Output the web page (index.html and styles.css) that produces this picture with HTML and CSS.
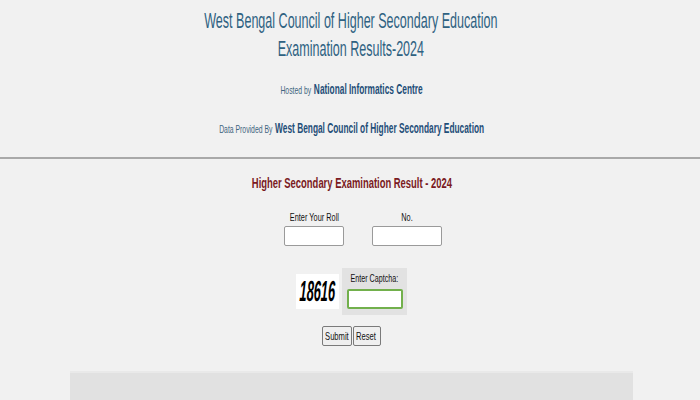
FILE: index.html
```html
<!DOCTYPE html>
<html>
<head>
<meta charset="utf-8">
<link rel="stylesheet" href="styles.css">
</head>
<body>
<header class="head">
  <h1 class="title"><span class="line">West Bengal Council of Higher Secondary Education</span><span class="line">Examination Results-2024</span></h1>
  <p class="credit host"><span class="nar sc-credit"><span class="small">Hosted by</span> <b>National Informatics Centre</b></span></p>
  <p class="credit data"><span class="nar sc-credit"><span class="small">Data Provided By</span> <b>West Bengal Council of Higher Secondary Education</b></span></p>
</header>
<main class="main">
  <h2 class="subtitle"><span class="nar sc-sub">Higher Secondary Examination Result - 2024</span></h2>
  <div class="roll">
    <div class="field f1">
      <label class="lbl"><span class="nar sc-lbl">Enter Your Roll</span></label>
      <input class="inp w1" type="text">
    </div>
    <div class="field f2">
      <label class="lbl"><span class="nar sc-lbl">No.</span></label>
      <input class="inp w2" type="text">
    </div>
  </div>
  <div class="captcha-row">
    <div class="captcha-img"><span class="nar sc-cap">18616</span></div>
    <div class="captcha-box">
      <label class="lbl"><span class="nar sc-lbl2">Enter Captcha:</span></label>
      <input class="inp cap" type="text">
    </div>
  </div>
  <div class="buttons">
    <button class="btn b-submit"><span class="nar sc-btn">Submit</span></button><button class="btn b-reset"><span class="nar sc-btn">Reset</span></button>
  </div>
  <div class="footer-box"></div>
</main>
</body>
</html>
```
FILE: styles.css
```css
html, body {
  margin: 0;
  padding: 0;
  background: #f1f1f1;
}
body {
  font-family: "Liberation Sans", Arial, sans-serif;
  width: 700px;
  height: 400px;
  overflow: hidden;
}
.nar {
  display: inline-block;
  white-space: nowrap;
  transform-origin: 50% 50%;
}
.sc-credit { transform: scaleX(0.595); }
.sc-sub { transform: scaleX(0.65); }
.sc-lbl { transform: scaleX(0.64); }
.sc-lbl2 { transform: scaleX(0.62); }
.sc-btn { transform: scaleX(0.66); }
.sc-cap { transform: scaleX(0.44) skewX(-4deg); }

.head {
  text-align: center;
  padding-top: 7px;
  height: 150px;
  border-bottom: 2px solid #a9a9a9;
}
.title {
  margin: 0;
  font-weight: normal;
  font-size: 22px;
  line-height: 28px;
  color: #2f6282;
}
.title .line {
  display: block;
  white-space: nowrap;
  transform: scaleX(0.57);
  transform-origin: 352px 50%;
}
.credit {
  margin: 0;
  padding-left: 4px;
  color: #1f4e78;
  line-height: 18px;
}
.host { margin-top: 17px; }
.data { margin-top: 20px; }
.credit .small {
  font-size: 11.5px;
  color: #3f6580;
}
.credit b {
  font-size: 14px;
  font-weight: bold;
}
.main {
  display: flex;
  flex-direction: column;
  align-items: center;
}
.subtitle {
  margin: 15px 0 0 3px;
  font-size: 14.5px;
  line-height: 18px;
  color: #7a1a22;
  font-weight: bold;
}
.roll {
  display: flex;
  gap: 28px;
  margin-top: 18px;
  margin-left: 26px;
}
.field {
  display: flex;
  flex-direction: column;
  align-items: center;
}
.f1 { width: 60px; }
.f2 { width: 70px; }
.lbl {
  font-size: 11.5px;
  line-height: 14px;
  color: #111;
  white-space: nowrap;
}
.inp {
  box-sizing: border-box;
  height: 20px;
  margin: 2px 0 0;
  border: 1px solid #9a9a9a;
  border-radius: 2px;
  background: #fff;
  padding: 0;
}
.w1 { width: 60px; }
.w2 { width: 70px; }
.captcha-row {
  display: flex;
  align-items: center;
  gap: 3px;
  margin-top: 22px;
  margin-left: 3px;
}
.captcha-img {
  width: 43px;
  height: 35px;
  background: #fff;
  display: flex;
  align-items: center;
  justify-content: center;
  overflow: hidden;
}
.sc-cap {
  font-weight: bold;
  font-style: italic;
  font-size: 29px;
  line-height: 29px;
  color: #000;
}
.captcha-box {
  box-sizing: border-box;
  background: #e2e2e2;
  padding: 3px 5px 5px;
  display: flex;
  flex-direction: column;
  align-items: center;
  width: 65px;
  height: 47px;
}
.cap {
  width: 56px;
  margin-top: 4px;
  border: 2px solid #72b04c;
  border-radius: 2px;
}
.buttons {
  display: flex;
  margin-top: 11px;
  margin-left: 3px;
}
.btn {
  box-sizing: border-box;
  display: flex;
  align-items: center;
  justify-content: center;
  font-family: inherit;
  font-size: 11.5px;
  height: 20px;
  padding: 0;
  background: #efefef;
  border: 1px solid #7a7a7a;
  border-radius: 2px;
  color: #111;
  margin: 0 1px 0 0;
  overflow: visible;
}
.b-submit { width: 30px; }
.b-reset { width: 28px; }
.footer-box {
  margin-top: 25px;
  width: 563px;
  height: 40px;
  background: #e1e1e1;
  border-top: 2px solid #e9e9e9;
  margin-left: 3px;
}
```
